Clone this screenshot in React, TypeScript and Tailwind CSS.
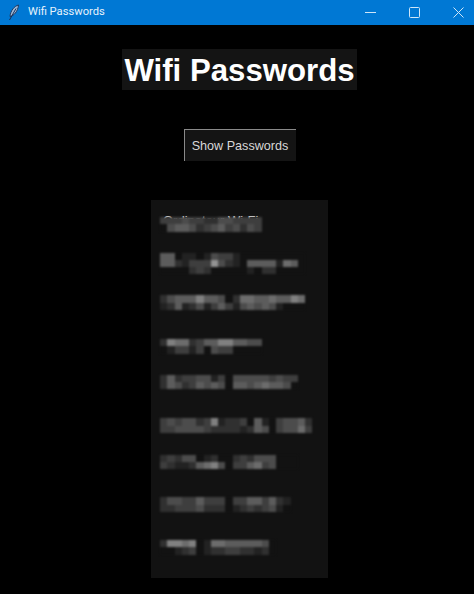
// App.tsx
import React from "react";

// grey level of one blurred cell, 0 is panel colour
const shades: Record<string, string> = {
  "0": "bg-[#121212]",
  "1": "bg-[#222222]",
  "2": "bg-[#303030]",
  "3": "bg-[#3e3e3e]",
  "4": "bg-[#4c4c4c]",
  "5": "bg-[#5c5c5c]",
  "6": "bg-[#6c6c6c]",
  "7": "bg-[#808080]",
  "8": "bg-[#929292]",
  "9": "bg-[#a8a8a8]",
};

const rows: { mt: string; lines: string[] }[] = [
  { mt: "mt-[17px]", lines: ["33343322443333", "04554234534243"] },
  { mt: "mt-[21px]", lines: ["55011014331000000000", "55213338421055551650", "00002320000010220000"] },
  { mt: "mt-[21px]", lines: ["24555755402665565576", "12512413531454541000"] },
  { mt: "mt-[29px]", lines: ["27662355775544", "01331304330000"] },
  { mt: "mt-[21px]", lines: ["2523344130444443433", "2542354540554565540"] },
  { mt: "mt-[29px]", lines: ["343442371223051034452", "334444322221254034463"] },
  { mt: "mt-[22px]", lines: ["2324401200232444000", "3211256740335634000"] },
  { mt: "mt-[28px]", lines: ["244335333033553521", "223334222012323410"] },
  { mt: "mt-[28px]", lines: ["2776701665555540", "0012301223322120"] },
];

const BlurredRow: React.FC<{ mt: string; lines: string[] }> = ({ mt, lines }) => (
  <div className={`${mt} blur-[1.2px]`}>
    {lines.map((line, i) => (
      <div key={i} className="flex h-[7.3px]">
        {line.split("").map((c, j) => (
          <div key={j} className={`w-[7.25px] shrink-0 ${shades[c]}`} />
        ))}
      </div>
    ))}
  </div>
);

const Feather = () => (
  <svg width="12" height="17" viewBox="0 0 12 17" fill="none">
    <path d="M10.5 1C6.5 2 2.5 6.5 2 12.5C5.5 12 10 7.5 10.5 1Z" fill="#9fb8d6" stroke="#1d3a63" strokeWidth="1" />
    <path d="M8 4.5L1.5 16" stroke="#16305a" strokeWidth="1" />
  </svg>
);

const App: React.FC = () => {
  return (
    <div className="flex h-[594px] w-[474px] flex-col overflow-hidden bg-black font-['Liberation_Sans',sans-serif]">
      {/* Title bar */}
      <div className="flex h-[25px] shrink-0 items-center bg-[#0078d4] pl-[8px]">
        <Feather />
        <span className="mb-[1px] ml-[8px] font-['Roboto',sans-serif] text-[11.2px] text-[#e6f2fb]">Wifi Passwords</span>
        <div className="ml-auto flex items-center pr-[10px]">
          <svg width="11" height="11" viewBox="0 0 11 11" className="mr-[33px]">
            <path d="M0 5.5H11" stroke="#cfe6f8" strokeWidth="1" />
          </svg>
          <svg width="11" height="11" viewBox="0 0 11 11" className="mr-[33px]">
            <rect x="0.5" y="0.5" width="10" height="10" rx="1" fill="none" stroke="#cfe6f8" strokeWidth="1" />
          </svg>
          <svg width="11" height="11" viewBox="0 0 11 11">
            <path d="M0.5 0.5L10.5 10.5M10.5 0.5L0.5 10.5" stroke="#cfe6f8" strokeWidth="1" />
          </svg>
        </div>
      </div>

      {/* Content */}
      <div className="flex flex-col items-center pl-[5px]">
        <h1 className="mt-[24px] flex h-[41px] w-[235px] items-center justify-center whitespace-nowrap bg-[#141414] pt-[3px] text-[31.2px] font-bold text-white">
          Wifi Passwords
        </h1>
        <button className="mt-[39px] h-[32px] w-[112px] whitespace-nowrap border-t border-l border-t-[#8a8a8a] border-l-[#8a8a8a] bg-[#141414] pt-[2px] text-[12.6px] text-[#d8d8d8]">
          Show Passwords
        </button>
        <div className="mt-[39px] h-[378px] w-[177px] bg-[#121212] pl-[9px]">
          <div className="relative">
            <span className="absolute top-[-3px] left-[3px] whitespace-nowrap text-[13px] leading-none text-white">Ordinateur Wi-Fi</span>
            {rows.map((row, i) => (
              <BlurredRow key={i} mt={row.mt} lines={row.lines} />
            ))}
          </div>
        </div>
      </div>
    </div>
  );
};

export default App;
